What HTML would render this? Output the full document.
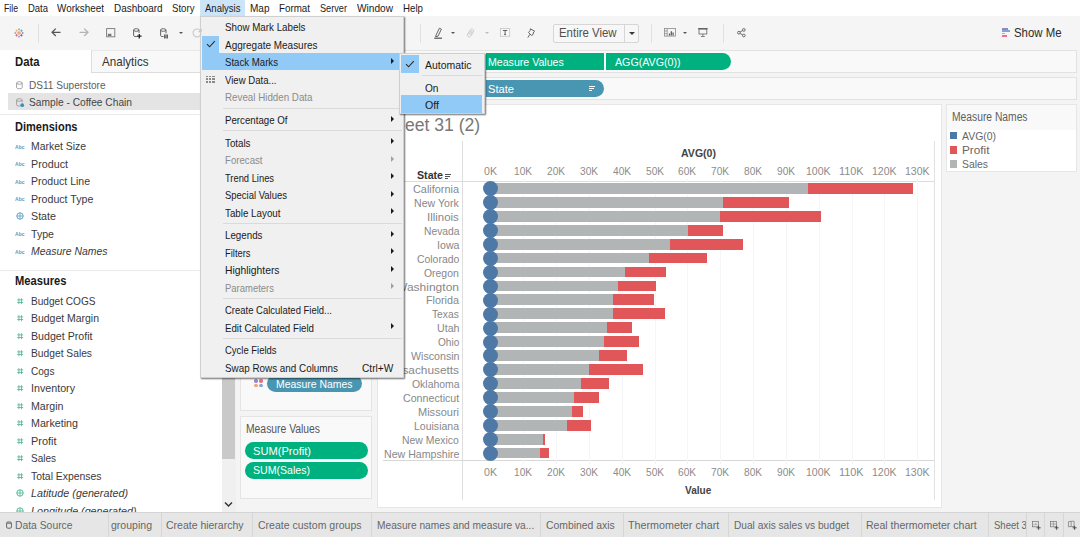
<!DOCTYPE html>
<html><head><meta charset="utf-8"><title>Tableau</title>
<style>
*{box-sizing:border-box;margin:0;padding:0}
html,body{width:1080px;height:537px;overflow:hidden;background:#f4f4f4;font-family:"Liberation Sans",sans-serif}
body{position:relative}
svg{position:absolute;overflow:visible}
</style></head><body>
<div style="position:absolute;left:0px;top:0px;width:1080px;height:16px;background:#fff;"></div>
<div style="position:absolute;left:199.8px;top:0px;width:45px;height:15.8px;background:#cce4f7;"></div>
<div style="position:absolute;top:0.00px;line-height:16px;font-size:11.5px;color:#1a1a1a;white-space:nowrap;left:4.00px;transform-origin:0 50%;transform:scaleX(0.7555);">File</div>
<div style="position:absolute;top:0.00px;line-height:16px;font-size:11.5px;color:#1a1a1a;white-space:nowrap;left:27.50px;transform-origin:0 50%;transform:scaleX(0.8233);">Data</div>
<div style="position:absolute;top:0.00px;line-height:16px;font-size:11.5px;color:#1a1a1a;white-space:nowrap;left:57.00px;transform-origin:0 50%;transform:scaleX(0.8584);">Worksheet</div>
<div style="position:absolute;top:0.00px;line-height:16px;font-size:11.5px;color:#1a1a1a;white-space:nowrap;left:114.00px;transform-origin:0 50%;transform:scaleX(0.8621);">Dashboard</div>
<div style="position:absolute;top:0.00px;line-height:16px;font-size:11.5px;color:#1a1a1a;white-space:nowrap;left:172.00px;transform-origin:0 50%;transform:scaleX(0.8383);">Story</div>
<div style="position:absolute;top:0.00px;line-height:16px;font-size:11.5px;color:#1a1a1a;white-space:nowrap;left:204.50px;transform-origin:0 50%;transform:scaleX(0.8290);">Analysis</div>
<div style="position:absolute;top:0.00px;line-height:16px;font-size:11.5px;color:#1a1a1a;white-space:nowrap;left:249.50px;transform-origin:0 50%;transform:scaleX(0.8717);">Map</div>
<div style="position:absolute;top:0.00px;line-height:16px;font-size:11.5px;color:#1a1a1a;white-space:nowrap;left:279.00px;transform-origin:0 50%;transform:scaleX(0.8512);">Format</div>
<div style="position:absolute;top:0.00px;line-height:16px;font-size:11.5px;color:#1a1a1a;white-space:nowrap;left:320.00px;transform-origin:0 50%;transform:scaleX(0.7971);">Server</div>
<div style="position:absolute;top:0.00px;line-height:16px;font-size:11.5px;color:#1a1a1a;white-space:nowrap;left:357.00px;transform-origin:0 50%;transform:scaleX(0.8802);">Window</div>
<div style="position:absolute;top:0.00px;line-height:16px;font-size:11.5px;color:#1a1a1a;white-space:nowrap;left:403.00px;transform-origin:0 50%;transform:scaleX(0.8456);">Help</div>
<div style="position:absolute;left:0px;top:16px;width:1080px;height:34px;background:#f5f5f5;"></div>
<div style="position:absolute;left:38px;top:24px;width:1px;height:19px;background:#e0e0e0;"></div>
<div style="position:absolute;left:419.5px;top:24px;width:1px;height:19px;background:#e0e0e0;"></div>
<div style="position:absolute;left:651px;top:24px;width:1px;height:19px;background:#e0e0e0;"></div>
<div style="position:absolute;left:722.5px;top:24px;width:1px;height:19px;background:#e0e0e0;"></div>
<div style="position:absolute;left:553px;top:24px;width:86px;height:19px;background:#f7f7f7;border:1px solid #d6d6d6;border-radius:2px;"></div>
<div style="position:absolute;left:624px;top:24px;width:1px;height:19px;background:#d6d6d6;"></div>
<div style="position:absolute;top:25.20px;line-height:16px;font-size:12.5px;color:#505050;white-space:nowrap;left:559.30px;transform-origin:0 50%;transform:scaleX(0.9128);">Entire View</div>
<div style="position:absolute;left:628.6px;top:31.8px;width:0;height:0;border-top:3.5px solid #3a3a3a;border-left:3.1px solid transparent;border-right:3.1px solid transparent"></div>
<div style="position:absolute;top:24.80px;line-height:16px;font-size:12.5px;color:#2a2a2a;white-space:nowrap;left:1014.00px;transform-origin:0 50%;transform:scaleX(0.9116);">Show Me</div>
<div style="position:absolute;left:1002.1px;top:27.8px;width:6px;height:1.9px;background:#9b86b8;"></div>
<div style="position:absolute;left:1002.1px;top:30.3px;width:8px;height:1.7px;background:#7fa6d6;"></div>
<div style="position:absolute;left:1002.1px;top:32.9px;width:2.8px;height:1.2px;background:#f0a070;"></div>
<div style="position:absolute;left:1002.1px;top:34.8px;width:4.8px;height:2.1px;background:#f0708a;"></div>
<div style="position:absolute;left:0px;top:50px;width:221.5px;height:462px;background:#fff;"></div>
<div style="position:absolute;left:91px;top:50px;width:130.5px;height:22.5px;background:#f8f8f8;border-left:1px solid #dcdcdc;border-bottom:1px solid #dcdcdc;border-top:1px solid #e8e8e8;"></div>
<div style="position:absolute;top:53.50px;line-height:16px;font-size:13px;color:#1a1a1a;white-space:nowrap;font-weight:bold;left:14.50px;transform-origin:0 50%;transform:scaleX(0.8695);">Data</div>
<div style="position:absolute;top:53.50px;line-height:16px;font-size:13px;color:#333;white-space:nowrap;left:102.00px;transform-origin:0 50%;transform:scaleX(0.8939);">Analytics</div>
<div style="position:absolute;top:77.00px;line-height:16px;font-size:11.5px;color:#5e5e5e;white-space:nowrap;left:29.00px;transform-origin:0 50%;transform:scaleX(0.8757);">DS11 Superstore</div>
<div style="position:absolute;left:8px;top:93.2px;width:213.5px;height:16.5px;background:#e4e4e4;"></div>
<div style="position:absolute;top:94.00px;line-height:16px;font-size:11.5px;color:#444;white-space:nowrap;left:29.00px;transform-origin:0 50%;transform:scaleX(0.8869);">Sample - Coffee Chain</div>
<div style="position:absolute;left:0px;top:113.8px;width:221.5px;height:1px;background:#ececec;"></div>
<div style="position:absolute;top:118.80px;line-height:16px;font-size:12.5px;color:#1a1a1a;white-space:nowrap;font-weight:bold;left:14.50px;transform-origin:0 50%;transform:scaleX(0.8822);">Dimensions</div>
<div style="position:absolute;top:138.25px;line-height:16px;font-size:11.5px;color:#3a3a3a;white-space:nowrap;left:31.00px;transform-origin:0 50%;transform:scaleX(0.9059);">Market Size</div>
<div style="position:absolute;top:138.75px;line-height:16px;font-size:5.8px;color:#5f9bc0;white-space:nowrap;font-weight:bold;left:15.00px;transform-origin:0 50%;transform:scaleX(0.8766);">Abc</div>
<div style="position:absolute;top:155.75px;line-height:16px;font-size:11.5px;color:#3a3a3a;white-space:nowrap;left:31.00px;transform-origin:0 50%;transform:scaleX(0.9336);">Product</div>
<div style="position:absolute;top:156.25px;line-height:16px;font-size:5.8px;color:#5f9bc0;white-space:nowrap;font-weight:bold;left:15.00px;transform-origin:0 50%;transform:scaleX(0.8766);">Abc</div>
<div style="position:absolute;top:173.25px;line-height:16px;font-size:11.5px;color:#3a3a3a;white-space:nowrap;left:31.00px;transform-origin:0 50%;transform:scaleX(0.9137);">Product Line</div>
<div style="position:absolute;top:173.75px;line-height:16px;font-size:5.8px;color:#5f9bc0;white-space:nowrap;font-weight:bold;left:15.00px;transform-origin:0 50%;transform:scaleX(0.8766);">Abc</div>
<div style="position:absolute;top:190.75px;line-height:16px;font-size:11.5px;color:#3a3a3a;white-space:nowrap;left:31.00px;transform-origin:0 50%;transform:scaleX(0.9224);">Product Type</div>
<div style="position:absolute;top:191.25px;line-height:16px;font-size:5.8px;color:#5f9bc0;white-space:nowrap;font-weight:bold;left:15.00px;transform-origin:0 50%;transform:scaleX(0.8766);">Abc</div>
<div style="position:absolute;top:208.25px;line-height:16px;font-size:11.5px;color:#3a3a3a;white-space:nowrap;left:31.00px;transform-origin:0 50%;transform:scaleX(0.9310);">State</div>
<svg style="left:15.6px;top:212.35px" width="8" height="8" viewBox="0 0 8 8"><circle cx="4" cy="4" r="3.2" fill="none" stroke="#4d94c1" stroke-width="0.85"/><path d="M4 0.8V7.2M0.8 4H7.2" stroke="#4d94c1" stroke-width="0.75"/></svg>
<div style="position:absolute;top:225.75px;line-height:16px;font-size:11.5px;color:#3a3a3a;white-space:nowrap;left:31.00px;transform-origin:0 50%;transform:scaleX(0.9225);">Type</div>
<div style="position:absolute;top:226.25px;line-height:16px;font-size:5.8px;color:#5f9bc0;white-space:nowrap;font-weight:bold;left:15.00px;transform-origin:0 50%;transform:scaleX(0.8766);">Abc</div>
<div style="position:absolute;top:243.25px;line-height:16px;font-size:11.5px;color:#3a3a3a;white-space:nowrap;font-style:italic;left:31.00px;transform-origin:0 50%;transform:scaleX(0.9068);">Measure Names</div>
<div style="position:absolute;top:243.75px;line-height:16px;font-size:5.8px;color:#5f9bc0;white-space:nowrap;font-weight:bold;left:15.00px;transform-origin:0 50%;transform:scaleX(0.8766);">Abc</div>
<div style="position:absolute;left:0px;top:269.6px;width:221.5px;height:1px;background:#ececec;"></div>
<div style="position:absolute;top:273.30px;line-height:16px;font-size:12.5px;color:#1a1a1a;white-space:nowrap;font-weight:bold;left:14.50px;transform-origin:0 50%;transform:scaleX(0.8930);">Measures</div>
<div style="position:absolute;top:292.75px;line-height:16px;font-size:11.5px;color:#3a3a3a;white-space:nowrap;left:31.00px;transform-origin:0 50%;transform:scaleX(0.8774);">Budget COGS</div>
<svg style="left:16.6px;top:297.65px" width="6.4" height="6.4" viewBox="0 0 6.4 6.4"><path d="M1.9 0.2V6.2M4.5 0.2V6.2M0.2 1.9H6.2M0.2 4.5H6.2" stroke="#3fb08d" stroke-width="0.75" fill="none"/></svg>
<div style="position:absolute;top:310.25px;line-height:16px;font-size:11.5px;color:#3a3a3a;white-space:nowrap;left:31.00px;transform-origin:0 50%;transform:scaleX(0.9092);">Budget Margin</div>
<svg style="left:16.6px;top:315.15px" width="6.4" height="6.4" viewBox="0 0 6.4 6.4"><path d="M1.9 0.2V6.2M4.5 0.2V6.2M0.2 1.9H6.2M0.2 4.5H6.2" stroke="#3fb08d" stroke-width="0.75" fill="none"/></svg>
<div style="position:absolute;top:327.75px;line-height:16px;font-size:11.5px;color:#3a3a3a;white-space:nowrap;left:31.00px;transform-origin:0 50%;transform:scaleX(0.9250);">Budget Profit</div>
<svg style="left:16.6px;top:332.65px" width="6.4" height="6.4" viewBox="0 0 6.4 6.4"><path d="M1.9 0.2V6.2M4.5 0.2V6.2M0.2 1.9H6.2M0.2 4.5H6.2" stroke="#3fb08d" stroke-width="0.75" fill="none"/></svg>
<div style="position:absolute;top:345.25px;line-height:16px;font-size:11.5px;color:#3a3a3a;white-space:nowrap;left:31.00px;transform-origin:0 50%;transform:scaleX(0.8917);">Budget Sales</div>
<svg style="left:16.6px;top:350.15px" width="6.4" height="6.4" viewBox="0 0 6.4 6.4"><path d="M1.9 0.2V6.2M4.5 0.2V6.2M0.2 1.9H6.2M0.2 4.5H6.2" stroke="#3fb08d" stroke-width="0.75" fill="none"/></svg>
<div style="position:absolute;top:362.75px;line-height:16px;font-size:11.5px;color:#3a3a3a;white-space:nowrap;left:31.00px;transform-origin:0 50%;transform:scaleX(0.8753);">Cogs</div>
<svg style="left:16.6px;top:367.65px" width="6.4" height="6.4" viewBox="0 0 6.4 6.4"><path d="M1.9 0.2V6.2M4.5 0.2V6.2M0.2 1.9H6.2M0.2 4.5H6.2" stroke="#3fb08d" stroke-width="0.75" fill="none"/></svg>
<div style="position:absolute;top:380.25px;line-height:16px;font-size:11.5px;color:#3a3a3a;white-space:nowrap;left:31.00px;transform-origin:0 50%;transform:scaleX(0.9302);">Inventory</div>
<svg style="left:16.6px;top:385.15px" width="6.4" height="6.4" viewBox="0 0 6.4 6.4"><path d="M1.9 0.2V6.2M4.5 0.2V6.2M0.2 1.9H6.2M0.2 4.5H6.2" stroke="#3fb08d" stroke-width="0.75" fill="none"/></svg>
<div style="position:absolute;top:397.75px;line-height:16px;font-size:11.5px;color:#3a3a3a;white-space:nowrap;left:31.00px;transform-origin:0 50%;transform:scaleX(0.9246);">Margin</div>
<svg style="left:16.6px;top:402.65px" width="6.4" height="6.4" viewBox="0 0 6.4 6.4"><path d="M1.9 0.2V6.2M4.5 0.2V6.2M0.2 1.9H6.2M0.2 4.5H6.2" stroke="#3fb08d" stroke-width="0.75" fill="none"/></svg>
<div style="position:absolute;top:415.25px;line-height:16px;font-size:11.5px;color:#3a3a3a;white-space:nowrap;left:31.00px;transform-origin:0 50%;transform:scaleX(0.9308);">Marketing</div>
<svg style="left:16.6px;top:420.15px" width="6.4" height="6.4" viewBox="0 0 6.4 6.4"><path d="M1.9 0.2V6.2M4.5 0.2V6.2M0.2 1.9H6.2M0.2 4.5H6.2" stroke="#3fb08d" stroke-width="0.75" fill="none"/></svg>
<div style="position:absolute;top:432.75px;line-height:16px;font-size:11.5px;color:#3a3a3a;white-space:nowrap;left:31.00px;transform-origin:0 50%;transform:scaleX(0.9500);">Profit</div>
<svg style="left:16.6px;top:437.65px" width="6.4" height="6.4" viewBox="0 0 6.4 6.4"><path d="M1.9 0.2V6.2M4.5 0.2V6.2M0.2 1.9H6.2M0.2 4.5H6.2" stroke="#3fb08d" stroke-width="0.75" fill="none"/></svg>
<div style="position:absolute;top:450.25px;line-height:16px;font-size:11.5px;color:#3a3a3a;white-space:nowrap;left:31.00px;transform-origin:0 50%;transform:scaleX(0.8691);">Sales</div>
<svg style="left:16.6px;top:455.15px" width="6.4" height="6.4" viewBox="0 0 6.4 6.4"><path d="M1.9 0.2V6.2M4.5 0.2V6.2M0.2 1.9H6.2M0.2 4.5H6.2" stroke="#3fb08d" stroke-width="0.75" fill="none"/></svg>
<div style="position:absolute;top:467.75px;line-height:16px;font-size:11.5px;color:#3a3a3a;white-space:nowrap;left:31.00px;transform-origin:0 50%;transform:scaleX(0.9040);">Total Expenses</div>
<svg style="left:16.6px;top:472.65px" width="6.4" height="6.4" viewBox="0 0 6.4 6.4"><path d="M1.9 0.2V6.2M4.5 0.2V6.2M0.2 1.9H6.2M0.2 4.5H6.2" stroke="#3fb08d" stroke-width="0.75" fill="none"/></svg>
<div style="position:absolute;top:485.25px;line-height:16px;font-size:11.5px;color:#3a3a3a;white-space:nowrap;font-style:italic;left:31.00px;transform-origin:0 50%;transform:scaleX(0.9365);">Latitude (generated)</div>
<svg style="left:15.6px;top:489.35px" width="8" height="8" viewBox="0 0 8 8"><circle cx="4" cy="4" r="3.2" fill="none" stroke="#3bb08f" stroke-width="0.85"/><path d="M4 0.8V7.2M0.8 4H7.2" stroke="#3bb08f" stroke-width="0.75"/></svg>
<div style="position:absolute;top:502.75px;line-height:16px;font-size:11.5px;color:#3a3a3a;white-space:nowrap;font-style:italic;left:31.00px;transform-origin:0 50%;transform:scaleX(0.9322);">Longitude (generated)</div>
<svg style="left:15.6px;top:506.85px" width="8" height="8" viewBox="0 0 8 8"><circle cx="4" cy="4" r="3.2" fill="none" stroke="#3bb08f" stroke-width="0.85"/><path d="M4 0.8V7.2M0.8 4H7.2" stroke="#3bb08f" stroke-width="0.75"/></svg>
<div style="position:absolute;left:221.5px;top:50px;width:14px;height:462px;background:#f0f0f0;"></div>
<div style="position:absolute;left:221.5px;top:330px;width:13.5px;height:129px;background:#c9c9c9;"></div>
<svg style="left:224px;top:501px" width="9" height="7" viewBox="0 0 9 7"><path d="M1 1.5L4.5 5L8 1.5" stroke="#333" stroke-width="1.4" fill="none"/></svg>
<div style="position:absolute;left:240px;top:105px;width:131.5px;height:306px;background:#f9f9f9;border:1px solid #e4e4e4;"></div>
<div style="position:absolute;left:267px;top:374.5px;width:95px;height:17px;background:#4996b2;border-radius:8.5px;"></div>
<div style="position:absolute;top:375.50px;line-height:16px;font-size:11.5px;color:#fff;white-space:nowrap;left:276.00px;transform-origin:0 50%;transform:scaleX(0.9068);">Measure Names</div>
<div style="position:absolute;left:254.1px;top:379px;width:3.6px;height:3.6px;background:#9a86c5;border-radius:50%;"></div>
<div style="position:absolute;left:259.0px;top:379px;width:3.6px;height:3.6px;background:#ee6b82;border-radius:50%;"></div>
<div style="position:absolute;left:254.1px;top:383.5px;width:3.6px;height:3.6px;background:#f2a273;border-radius:50%;"></div>
<div style="position:absolute;left:259.0px;top:383.5px;width:3.6px;height:3.6px;background:#83a6d6;border-radius:50%;"></div>
<div style="position:absolute;left:240px;top:415.5px;width:131.5px;height:83.5px;background:#f9f9f9;border:1px solid #e4e4e4;"></div>
<div style="position:absolute;top:420.50px;line-height:16px;font-size:12px;color:#555;white-space:nowrap;left:246.00px;transform-origin:0 50%;transform:scaleX(0.8622);">Measure Values</div>
<div style="position:absolute;left:244.5px;top:442px;width:123px;height:17px;background:#00b180;border-radius:8.5px;"></div>
<div style="position:absolute;left:244.5px;top:461.5px;width:123px;height:17px;background:#00b180;border-radius:8.5px;"></div>
<div style="position:absolute;top:442.50px;line-height:16px;font-size:11.5px;color:#fff;white-space:nowrap;left:253.00px;transform-origin:0 50%;transform:scaleX(0.9658);">SUM(Profit)</div>
<div style="position:absolute;top:462.00px;line-height:16px;font-size:11.5px;color:#fff;white-space:nowrap;left:253.00px;transform-origin:0 50%;transform:scaleX(0.9196);">SUM(Sales)</div>
<div style="position:absolute;left:377px;top:50px;width:700px;height:23px;background:#f9f9f9;border:1px solid #e2e2e2;"></div>
<div style="position:absolute;left:377px;top:77px;width:700px;height:23px;background:#f9f9f9;border:1px solid #e2e2e2;"></div>
<div style="position:absolute;left:486px;top:53px;width:118px;height:17px;background:#00b180;border-radius:0;"></div>
<div style="position:absolute;left:605.75px;top:53px;width:125.5px;height:17px;background:#00b180;border-radius:0 8.5px 8.5px 0;"></div>
<div style="position:absolute;top:53.50px;line-height:16px;font-size:11.5px;color:#fff;white-space:nowrap;left:488.00px;transform-origin:0 50%;transform:scaleX(0.9210);">Measure Values</div>
<div style="position:absolute;top:53.50px;line-height:16px;font-size:11.5px;color:#fff;white-space:nowrap;left:615.00px;transform-origin:0 50%;transform:scaleX(0.9264);">AGG(AVG(0))</div>
<div style="position:absolute;left:486px;top:80px;width:118px;height:17px;background:#4996b2;border-radius:0 8.5px 8.5px 0;"></div>
<div style="position:absolute;top:80.50px;line-height:16px;font-size:11.5px;color:#fff;white-space:nowrap;left:488.00px;transform-origin:0 50%;transform:scaleX(0.9683);">State</div>
<div style="position:absolute;left:589px;top:86.0px;width:6px;height:1.1px;background:#fff;"></div>
<div style="position:absolute;left:589px;top:88.2px;width:4.5px;height:1.1px;background:#fff;"></div>
<div style="position:absolute;left:589px;top:90.4px;width:3px;height:1.1px;background:#fff;"></div>
<div style="position:absolute;left:376.5px;top:104px;width:565px;height:403.5px;background:#fff;border:1px solid #e6e6e6;"></div>
<div style="position:absolute;top:117.00px;line-height:16px;font-size:17.5px;color:#787878;white-space:nowrap;left:404.60px;transform-origin:0 50%;transform:scaleX(1.0039);">eet 31 (2)</div>
<div style="position:absolute;left:462px;top:141px;width:1px;height:359px;background:#dedede;"></div>
<div style="position:absolute;left:383px;top:181.3px;width:551px;height:1px;background:#dcdcdc;"></div>
<div style="position:absolute;left:383px;top:460px;width:551px;height:1px;background:#d8d8d8;"></div>
<div style="position:absolute;left:934px;top:141px;width:1px;height:359px;background:#e2e2e2;"></div>
<div style="position:absolute;left:522.5px;top:182.5px;width:1px;height:278px;background:#f6f6f6;"></div>
<div style="position:absolute;left:522.5px;top:178.5px;width:1px;height:3px;background:#f1f1f1;"></div>
<div style="position:absolute;left:522.5px;top:461px;width:1px;height:3px;background:#f1f1f1;"></div>
<div style="position:absolute;left:555.5px;top:182.5px;width:1px;height:278px;background:#f6f6f6;"></div>
<div style="position:absolute;left:555.5px;top:178.5px;width:1px;height:3px;background:#f1f1f1;"></div>
<div style="position:absolute;left:555.5px;top:461px;width:1px;height:3px;background:#f1f1f1;"></div>
<div style="position:absolute;left:588.5px;top:182.5px;width:1px;height:278px;background:#f6f6f6;"></div>
<div style="position:absolute;left:588.5px;top:178.5px;width:1px;height:3px;background:#f1f1f1;"></div>
<div style="position:absolute;left:588.5px;top:461px;width:1px;height:3px;background:#f1f1f1;"></div>
<div style="position:absolute;left:621.5px;top:182.5px;width:1px;height:278px;background:#f6f6f6;"></div>
<div style="position:absolute;left:621.5px;top:178.5px;width:1px;height:3px;background:#f1f1f1;"></div>
<div style="position:absolute;left:621.5px;top:461px;width:1px;height:3px;background:#f1f1f1;"></div>
<div style="position:absolute;left:654.5px;top:182.5px;width:1px;height:278px;background:#f6f6f6;"></div>
<div style="position:absolute;left:654.5px;top:178.5px;width:1px;height:3px;background:#f1f1f1;"></div>
<div style="position:absolute;left:654.5px;top:461px;width:1px;height:3px;background:#f1f1f1;"></div>
<div style="position:absolute;left:686.5px;top:182.5px;width:1px;height:278px;background:#f6f6f6;"></div>
<div style="position:absolute;left:686.5px;top:178.5px;width:1px;height:3px;background:#f1f1f1;"></div>
<div style="position:absolute;left:686.5px;top:461px;width:1px;height:3px;background:#f1f1f1;"></div>
<div style="position:absolute;left:719.5px;top:182.5px;width:1px;height:278px;background:#f6f6f6;"></div>
<div style="position:absolute;left:719.5px;top:178.5px;width:1px;height:3px;background:#f1f1f1;"></div>
<div style="position:absolute;left:719.5px;top:461px;width:1px;height:3px;background:#f1f1f1;"></div>
<div style="position:absolute;left:752.5px;top:182.5px;width:1px;height:278px;background:#f6f6f6;"></div>
<div style="position:absolute;left:752.5px;top:178.5px;width:1px;height:3px;background:#f1f1f1;"></div>
<div style="position:absolute;left:752.5px;top:461px;width:1px;height:3px;background:#f1f1f1;"></div>
<div style="position:absolute;left:785.5px;top:182.5px;width:1px;height:278px;background:#f6f6f6;"></div>
<div style="position:absolute;left:785.5px;top:178.5px;width:1px;height:3px;background:#f1f1f1;"></div>
<div style="position:absolute;left:785.5px;top:461px;width:1px;height:3px;background:#f1f1f1;"></div>
<div style="position:absolute;left:818.5px;top:182.5px;width:1px;height:278px;background:#f6f6f6;"></div>
<div style="position:absolute;left:818.5px;top:178.5px;width:1px;height:3px;background:#f1f1f1;"></div>
<div style="position:absolute;left:818.5px;top:461px;width:1px;height:3px;background:#f1f1f1;"></div>
<div style="position:absolute;left:851.5px;top:182.5px;width:1px;height:278px;background:#f6f6f6;"></div>
<div style="position:absolute;left:851.5px;top:178.5px;width:1px;height:3px;background:#f1f1f1;"></div>
<div style="position:absolute;left:851.5px;top:461px;width:1px;height:3px;background:#f1f1f1;"></div>
<div style="position:absolute;left:883.5px;top:182.5px;width:1px;height:278px;background:#f6f6f6;"></div>
<div style="position:absolute;left:883.5px;top:178.5px;width:1px;height:3px;background:#f1f1f1;"></div>
<div style="position:absolute;left:883.5px;top:461px;width:1px;height:3px;background:#f1f1f1;"></div>
<div style="position:absolute;left:916.5px;top:182.5px;width:1px;height:278px;background:#f6f6f6;"></div>
<div style="position:absolute;left:916.5px;top:178.5px;width:1px;height:3px;background:#f1f1f1;"></div>
<div style="position:absolute;left:916.5px;top:461px;width:1px;height:3px;background:#f1f1f1;"></div>
<div style="position:absolute;top:166.80px;line-height:16px;font-size:11.5px;color:#333;white-space:nowrap;font-weight:bold;left:416.50px;transform-origin:0 50%;transform:scaleX(0.9246);">State</div>
<div style="position:absolute;left:444.75px;top:174.0px;width:6.5px;height:1.1px;background:#555;"></div>
<div style="position:absolute;left:444.75px;top:176.2px;width:5px;height:1.1px;background:#555;"></div>
<div style="position:absolute;left:444.75px;top:178.4px;width:3px;height:1.1px;background:#555;"></div>
<div style="position:absolute;top:145.00px;line-height:16px;font-size:11.5px;color:#444;white-space:nowrap;font-weight:bold;left:680.50px;transform-origin:0 50%;transform:scaleX(0.9181);">AVG(0)</div>
<div style="position:absolute;top:481.80px;line-height:16px;font-size:11.5px;color:#444;white-space:nowrap;font-weight:bold;left:685.00px;transform-origin:0 50%;transform:scaleX(0.8753);">Value</div>
<div style="position:absolute;top:163.25px;line-height:16px;font-size:11.5px;color:#8c8c8c;white-space:nowrap;left:484.00px;transform-origin:0 50%;transform:scaleX(0.9242);">0K</div>
<div style="position:absolute;top:464.25px;line-height:16px;font-size:11.5px;color:#8c8c8c;white-space:nowrap;left:484.00px;transform-origin:0 50%;transform:scaleX(0.9242);">0K</div>
<div style="position:absolute;top:163.25px;line-height:16px;font-size:11.5px;color:#8c8c8c;white-space:nowrap;left:514.32px;transform-origin:0 50%;transform:scaleX(0.8797);">10K</div>
<div style="position:absolute;top:464.25px;line-height:16px;font-size:11.5px;color:#8c8c8c;white-space:nowrap;left:514.32px;transform-origin:0 50%;transform:scaleX(0.8797);">10K</div>
<div style="position:absolute;top:163.25px;line-height:16px;font-size:11.5px;color:#8c8c8c;white-space:nowrap;left:547.14px;transform-origin:0 50%;transform:scaleX(0.8797);">20K</div>
<div style="position:absolute;top:464.25px;line-height:16px;font-size:11.5px;color:#8c8c8c;white-space:nowrap;left:547.14px;transform-origin:0 50%;transform:scaleX(0.8797);">20K</div>
<div style="position:absolute;top:163.25px;line-height:16px;font-size:11.5px;color:#8c8c8c;white-space:nowrap;left:579.96px;transform-origin:0 50%;transform:scaleX(0.8797);">30K</div>
<div style="position:absolute;top:464.25px;line-height:16px;font-size:11.5px;color:#8c8c8c;white-space:nowrap;left:579.96px;transform-origin:0 50%;transform:scaleX(0.8797);">30K</div>
<div style="position:absolute;top:163.25px;line-height:16px;font-size:11.5px;color:#8c8c8c;white-space:nowrap;left:612.78px;transform-origin:0 50%;transform:scaleX(0.8797);">40K</div>
<div style="position:absolute;top:464.25px;line-height:16px;font-size:11.5px;color:#8c8c8c;white-space:nowrap;left:612.78px;transform-origin:0 50%;transform:scaleX(0.8797);">40K</div>
<div style="position:absolute;top:163.25px;line-height:16px;font-size:11.5px;color:#8c8c8c;white-space:nowrap;left:645.60px;transform-origin:0 50%;transform:scaleX(0.8797);">50K</div>
<div style="position:absolute;top:464.25px;line-height:16px;font-size:11.5px;color:#8c8c8c;white-space:nowrap;left:645.60px;transform-origin:0 50%;transform:scaleX(0.8797);">50K</div>
<div style="position:absolute;top:163.25px;line-height:16px;font-size:11.5px;color:#8c8c8c;white-space:nowrap;left:678.42px;transform-origin:0 50%;transform:scaleX(0.8797);">60K</div>
<div style="position:absolute;top:464.25px;line-height:16px;font-size:11.5px;color:#8c8c8c;white-space:nowrap;left:678.42px;transform-origin:0 50%;transform:scaleX(0.8797);">60K</div>
<div style="position:absolute;top:163.25px;line-height:16px;font-size:11.5px;color:#8c8c8c;white-space:nowrap;left:711.24px;transform-origin:0 50%;transform:scaleX(0.8797);">70K</div>
<div style="position:absolute;top:464.25px;line-height:16px;font-size:11.5px;color:#8c8c8c;white-space:nowrap;left:711.24px;transform-origin:0 50%;transform:scaleX(0.8797);">70K</div>
<div style="position:absolute;top:163.25px;line-height:16px;font-size:11.5px;color:#8c8c8c;white-space:nowrap;left:744.06px;transform-origin:0 50%;transform:scaleX(0.8797);">80K</div>
<div style="position:absolute;top:464.25px;line-height:16px;font-size:11.5px;color:#8c8c8c;white-space:nowrap;left:744.06px;transform-origin:0 50%;transform:scaleX(0.8797);">80K</div>
<div style="position:absolute;top:163.25px;line-height:16px;font-size:11.5px;color:#8c8c8c;white-space:nowrap;left:776.88px;transform-origin:0 50%;transform:scaleX(0.8797);">90K</div>
<div style="position:absolute;top:464.25px;line-height:16px;font-size:11.5px;color:#8c8c8c;white-space:nowrap;left:776.88px;transform-origin:0 50%;transform:scaleX(0.8797);">90K</div>
<div style="position:absolute;top:163.25px;line-height:16px;font-size:11.5px;color:#8c8c8c;white-space:nowrap;left:806.40px;transform-origin:0 50%;transform:scaleX(0.9159);">100K</div>
<div style="position:absolute;top:464.25px;line-height:16px;font-size:11.5px;color:#8c8c8c;white-space:nowrap;left:806.40px;transform-origin:0 50%;transform:scaleX(0.9159);">100K</div>
<div style="position:absolute;top:163.25px;line-height:16px;font-size:11.5px;color:#8c8c8c;white-space:nowrap;left:839.22px;transform-origin:0 50%;transform:scaleX(0.9460);">110K</div>
<div style="position:absolute;top:464.25px;line-height:16px;font-size:11.5px;color:#8c8c8c;white-space:nowrap;left:839.22px;transform-origin:0 50%;transform:scaleX(0.9460);">110K</div>
<div style="position:absolute;top:163.25px;line-height:16px;font-size:11.5px;color:#8c8c8c;white-space:nowrap;left:872.04px;transform-origin:0 50%;transform:scaleX(0.9159);">120K</div>
<div style="position:absolute;top:464.25px;line-height:16px;font-size:11.5px;color:#8c8c8c;white-space:nowrap;left:872.04px;transform-origin:0 50%;transform:scaleX(0.9159);">120K</div>
<div style="position:absolute;top:163.25px;line-height:16px;font-size:11.5px;color:#8c8c8c;white-space:nowrap;left:904.86px;transform-origin:0 50%;transform:scaleX(0.9159);">130K</div>
<div style="position:absolute;top:464.25px;line-height:16px;font-size:11.5px;color:#8c8c8c;white-space:nowrap;left:904.86px;transform-origin:0 50%;transform:scaleX(0.9159);">130K</div>
<div style="position:absolute;top:181.00px;line-height:16px;font-size:11.5px;color:#888;white-space:nowrap;left:413.00px;transform-origin:0 50%;transform:scaleX(0.9469);">California</div>
<div style="position:absolute;left:490.5px;top:183.0px;width:317.5px;height:10.8px;background:#b1b5b5;"></div>
<div style="position:absolute;left:808px;top:183.0px;width:104.5px;height:10.8px;background:#e15759;"></div>
<div style="position:absolute;top:194.93px;line-height:16px;font-size:11.5px;color:#888;white-space:nowrap;left:414.00px;transform-origin:0 50%;transform:scaleX(0.9223);">New York</div>
<div style="position:absolute;left:490.5px;top:196.93px;width:232.5px;height:10.8px;background:#b1b5b5;"></div>
<div style="position:absolute;left:723px;top:196.93px;width:65.75px;height:10.8px;background:#e15759;"></div>
<div style="position:absolute;top:208.86px;line-height:16px;font-size:11.5px;color:#888;white-space:nowrap;left:427.25px;transform-origin:0 50%;transform:scaleX(0.9935);">Illinois</div>
<div style="position:absolute;left:490.5px;top:210.85999999999999px;width:229.5px;height:10.8px;background:#b1b5b5;"></div>
<div style="position:absolute;left:720px;top:210.85999999999999px;width:100.75px;height:10.8px;background:#e15759;"></div>
<div style="position:absolute;top:222.79px;line-height:16px;font-size:11.5px;color:#888;white-space:nowrap;left:423.50px;transform-origin:0 50%;transform:scaleX(0.8956);">Nevada</div>
<div style="position:absolute;left:490.5px;top:224.79px;width:197.0px;height:10.8px;background:#b1b5b5;"></div>
<div style="position:absolute;left:687.5px;top:224.79px;width:35.0px;height:10.8px;background:#e15759;"></div>
<div style="position:absolute;top:236.72px;line-height:16px;font-size:11.5px;color:#888;white-space:nowrap;left:436.50px;transform-origin:0 50%;transform:scaleX(0.9262);">Iowa</div>
<div style="position:absolute;left:490.5px;top:238.72px;width:179.5px;height:10.8px;background:#b1b5b5;"></div>
<div style="position:absolute;left:670px;top:238.72px;width:73px;height:10.8px;background:#e15759;"></div>
<div style="position:absolute;top:250.65px;line-height:16px;font-size:11.5px;color:#888;white-space:nowrap;left:416.75px;transform-origin:0 50%;transform:scaleX(0.9053);">Colorado</div>
<div style="position:absolute;left:490.5px;top:252.65px;width:158.25px;height:10.8px;background:#b1b5b5;"></div>
<div style="position:absolute;left:648.75px;top:252.65px;width:58.0px;height:10.8px;background:#e15759;"></div>
<div style="position:absolute;top:264.58px;line-height:16px;font-size:11.5px;color:#888;white-space:nowrap;left:424.25px;transform-origin:0 50%;transform:scaleX(0.9059);">Oregon</div>
<div style="position:absolute;left:490.5px;top:266.58000000000004px;width:134.0px;height:10.8px;background:#b1b5b5;"></div>
<div style="position:absolute;left:624.5px;top:266.58000000000004px;width:41.25px;height:10.8px;background:#e15759;"></div>
<div style="position:absolute;top:278.51px;line-height:16px;font-size:11.5px;color:#888;white-space:nowrap;left:396.00px;transform-origin:0 50%;transform:scaleX(1.0447);">Washington</div>
<div style="position:absolute;left:490.5px;top:280.51px;width:127.75px;height:10.8px;background:#b1b5b5;"></div>
<div style="position:absolute;left:618.25px;top:280.51px;width:37.25px;height:10.8px;background:#e15759;"></div>
<div style="position:absolute;top:292.44px;line-height:16px;font-size:11.5px;color:#888;white-space:nowrap;left:426.00px;transform-origin:0 50%;transform:scaleX(0.9388);">Florida</div>
<div style="position:absolute;left:490.5px;top:294.44000000000005px;width:122.5px;height:10.8px;background:#b1b5b5;"></div>
<div style="position:absolute;left:613px;top:294.44000000000005px;width:40.75px;height:10.8px;background:#e15759;"></div>
<div style="position:absolute;top:306.37px;line-height:16px;font-size:11.5px;color:#888;white-space:nowrap;left:432.25px;transform-origin:0 50%;transform:scaleX(0.8904);">Texas</div>
<div style="position:absolute;left:490.5px;top:308.37px;width:122.5px;height:10.8px;background:#b1b5b5;"></div>
<div style="position:absolute;left:613px;top:308.37px;width:52px;height:10.8px;background:#e15759;"></div>
<div style="position:absolute;top:320.30px;line-height:16px;font-size:11.5px;color:#888;white-space:nowrap;left:436.50px;transform-origin:0 50%;transform:scaleX(0.9262);">Utah</div>
<div style="position:absolute;left:490.5px;top:322.30000000000007px;width:116.0px;height:10.8px;background:#b1b5b5;"></div>
<div style="position:absolute;left:606.5px;top:322.30000000000007px;width:25.25px;height:10.8px;background:#e15759;"></div>
<div style="position:absolute;top:334.23px;line-height:16px;font-size:11.5px;color:#888;white-space:nowrap;left:437.75px;transform-origin:0 50%;transform:scaleX(0.8748);">Ohio</div>
<div style="position:absolute;left:490.5px;top:336.23px;width:113.0px;height:10.8px;background:#b1b5b5;"></div>
<div style="position:absolute;left:603.5px;top:336.23px;width:35.5px;height:10.8px;background:#e15759;"></div>
<div style="position:absolute;top:348.16px;line-height:16px;font-size:11.5px;color:#888;white-space:nowrap;left:410.50px;transform-origin:0 50%;transform:scaleX(0.9255);">Wisconsin</div>
<div style="position:absolute;left:490.5px;top:350.16px;width:108.5px;height:10.8px;background:#b1b5b5;"></div>
<div style="position:absolute;left:599px;top:350.16px;width:28.25px;height:10.8px;background:#e15759;"></div>
<div style="position:absolute;top:362.09px;line-height:16px;font-size:11.5px;color:#888;white-space:nowrap;left:380.00px;transform-origin:0 50%;transform:scaleX(1.0300);">Massachusetts</div>
<div style="position:absolute;left:490.5px;top:364.09000000000003px;width:98.5px;height:10.8px;background:#b1b5b5;"></div>
<div style="position:absolute;left:589px;top:364.09000000000003px;width:53.75px;height:10.8px;background:#e15759;"></div>
<div style="position:absolute;top:376.02px;line-height:16px;font-size:11.5px;color:#888;white-space:nowrap;left:411.50px;transform-origin:0 50%;transform:scaleX(0.9063);">Oklahoma</div>
<div style="position:absolute;left:490.5px;top:378.02px;width:90.0px;height:10.8px;background:#b1b5b5;"></div>
<div style="position:absolute;left:580.5px;top:378.02px;width:28.25px;height:10.8px;background:#e15759;"></div>
<div style="position:absolute;top:389.95px;line-height:16px;font-size:11.5px;color:#888;white-space:nowrap;left:402.75px;transform-origin:0 50%;transform:scaleX(0.9262);">Connecticut</div>
<div style="position:absolute;left:490.5px;top:391.95000000000005px;width:83.25px;height:10.8px;background:#b1b5b5;"></div>
<div style="position:absolute;left:573.75px;top:391.95000000000005px;width:25.25px;height:10.8px;background:#e15759;"></div>
<div style="position:absolute;top:403.88px;line-height:16px;font-size:11.5px;color:#888;white-space:nowrap;left:418.00px;transform-origin:0 50%;transform:scaleX(0.9577);">Missouri</div>
<div style="position:absolute;left:490.5px;top:405.88px;width:81.0px;height:10.8px;background:#b1b5b5;"></div>
<div style="position:absolute;left:571.5px;top:405.88px;width:11.75px;height:10.8px;background:#e15759;"></div>
<div style="position:absolute;top:417.81px;line-height:16px;font-size:11.5px;color:#888;white-space:nowrap;left:414.00px;transform-origin:0 50%;transform:scaleX(0.9140);">Louisiana</div>
<div style="position:absolute;left:490.5px;top:419.81000000000006px;width:76.0px;height:10.8px;background:#b1b5b5;"></div>
<div style="position:absolute;left:566.5px;top:419.81000000000006px;width:24.25px;height:10.8px;background:#e15759;"></div>
<div style="position:absolute;top:431.74px;line-height:16px;font-size:11.5px;color:#888;white-space:nowrap;left:402.25px;transform-origin:0 50%;transform:scaleX(0.9062);">New Mexico</div>
<div style="position:absolute;left:490.5px;top:433.74px;width:52.5px;height:10.8px;background:#b1b5b5;"></div>
<div style="position:absolute;left:543px;top:433.74px;width:2.25px;height:10.8px;background:#e15759;"></div>
<div style="position:absolute;top:445.67px;line-height:16px;font-size:11.5px;color:#888;white-space:nowrap;left:383.50px;transform-origin:0 50%;transform:scaleX(0.9230);">New Hampshire</div>
<div style="position:absolute;left:490.5px;top:447.6700000000001px;width:49.0px;height:10.8px;background:#b1b5b5;"></div>
<div style="position:absolute;left:539.5px;top:447.6700000000001px;width:9.0px;height:10.8px;background:#e15759;"></div>
<div style="position:absolute;left:483.0px;top:181.3px;width:15px;height:15px;background:#4e79a7;border-radius:50%;"></div>
<div style="position:absolute;left:483.0px;top:195.23000000000002px;width:15px;height:15px;background:#4e79a7;border-radius:50%;"></div>
<div style="position:absolute;left:483.0px;top:209.16000000000003px;width:15px;height:15px;background:#4e79a7;border-radius:50%;"></div>
<div style="position:absolute;left:483.0px;top:223.09px;width:15px;height:15px;background:#4e79a7;border-radius:50%;"></div>
<div style="position:absolute;left:483.0px;top:237.02px;width:15px;height:15px;background:#4e79a7;border-radius:50%;"></div>
<div style="position:absolute;left:483.0px;top:250.95000000000005px;width:15px;height:15px;background:#4e79a7;border-radius:50%;"></div>
<div style="position:absolute;left:483.0px;top:264.88px;width:15px;height:15px;background:#4e79a7;border-radius:50%;"></div>
<div style="position:absolute;left:483.0px;top:278.81px;width:15px;height:15px;background:#4e79a7;border-radius:50%;"></div>
<div style="position:absolute;left:483.0px;top:292.74px;width:15px;height:15px;background:#4e79a7;border-radius:50%;"></div>
<div style="position:absolute;left:483.0px;top:306.67px;width:15px;height:15px;background:#4e79a7;border-radius:50%;"></div>
<div style="position:absolute;left:483.0px;top:320.6px;width:15px;height:15px;background:#4e79a7;border-radius:50%;"></div>
<div style="position:absolute;left:483.0px;top:334.53px;width:15px;height:15px;background:#4e79a7;border-radius:50%;"></div>
<div style="position:absolute;left:483.0px;top:348.46000000000004px;width:15px;height:15px;background:#4e79a7;border-radius:50%;"></div>
<div style="position:absolute;left:483.0px;top:362.39px;width:15px;height:15px;background:#4e79a7;border-radius:50%;"></div>
<div style="position:absolute;left:483.0px;top:376.32px;width:15px;height:15px;background:#4e79a7;border-radius:50%;"></div>
<div style="position:absolute;left:483.0px;top:390.25px;width:15px;height:15px;background:#4e79a7;border-radius:50%;"></div>
<div style="position:absolute;left:483.0px;top:404.18px;width:15px;height:15px;background:#4e79a7;border-radius:50%;"></div>
<div style="position:absolute;left:483.0px;top:418.11px;width:15px;height:15px;background:#4e79a7;border-radius:50%;"></div>
<div style="position:absolute;left:483.0px;top:432.04px;width:15px;height:15px;background:#4e79a7;border-radius:50%;"></div>
<div style="position:absolute;left:483.0px;top:445.97px;width:15px;height:15px;background:#4e79a7;border-radius:50%;"></div>
<div style="position:absolute;left:946px;top:104px;width:131px;height:68px;background:#fff;border:1px solid #e6e6e6;"></div>
<div style="position:absolute;left:947px;top:105px;width:129px;height:24.5px;background:#f9f9f9;"></div>
<div style="position:absolute;top:109.00px;line-height:16px;font-size:12px;color:#5e5e5e;white-space:nowrap;left:951.50px;transform-origin:0 50%;transform:scaleX(0.8576);">Measure Names</div>
<div style="position:absolute;left:949.5px;top:131.6px;width:7.8px;height:7.8px;background:#4e79a7;"></div>
<div style="position:absolute;top:127.90px;line-height:16px;font-size:11.5px;color:#666;white-space:nowrap;left:961.50px;transform-origin:0 50%;transform:scaleX(0.9070);">AVG(0)</div>
<div style="position:absolute;left:949.5px;top:145.79999999999998px;width:7.8px;height:7.8px;background:#e15759;"></div>
<div style="position:absolute;top:142.10px;line-height:16px;font-size:11.5px;color:#666;white-space:nowrap;left:961.50px;transform-origin:0 50%;transform:scaleX(1.0246);">Profit</div>
<div style="position:absolute;left:949.5px;top:160.0px;width:7.8px;height:7.8px;background:#b1b5b5;"></div>
<div style="position:absolute;top:156.30px;line-height:16px;font-size:11.5px;color:#666;white-space:nowrap;left:961.50px;transform-origin:0 50%;transform:scaleX(0.9038);">Sales</div>
<div style="position:absolute;left:0px;top:512px;width:1080px;height:25px;background:#e6e6e6;border-top:1px solid #d4d4d4;"></div>
<div style="position:absolute;top:517.30px;line-height:16px;font-size:11.5px;color:#666;white-space:nowrap;left:14.50px;transform-origin:0 50%;transform:scaleX(0.8995);">Data Source</div>
<div style="position:absolute;top:517.30px;line-height:16px;font-size:11.5px;color:#666;white-space:nowrap;left:165.50px;transform-origin:0 50%;transform:scaleX(0.9117);">Create hierarchy</div>
<div style="position:absolute;top:517.30px;line-height:16px;font-size:11.5px;color:#666;white-space:nowrap;left:257.50px;transform-origin:0 50%;transform:scaleX(0.9148);">Create custom groups</div>
<div style="position:absolute;top:517.30px;line-height:16px;font-size:11.5px;color:#666;white-space:nowrap;left:377.00px;transform-origin:0 50%;transform:scaleX(0.8849);">Measure names and measure va...</div>
<div style="position:absolute;top:517.30px;line-height:16px;font-size:11.5px;color:#666;white-space:nowrap;left:545.50px;transform-origin:0 50%;transform:scaleX(0.9038);">Combined axis</div>
<div style="position:absolute;top:517.30px;line-height:16px;font-size:11.5px;color:#666;white-space:nowrap;left:628.00px;transform-origin:0 50%;transform:scaleX(0.9332);">Thermometer chart</div>
<div style="position:absolute;top:517.30px;line-height:16px;font-size:11.5px;color:#666;white-space:nowrap;left:733.75px;transform-origin:0 50%;transform:scaleX(0.8819);">Dual axis sales vs budget</div>
<div style="position:absolute;top:517.30px;line-height:16px;font-size:11.5px;color:#666;white-space:nowrap;left:866.25px;transform-origin:0 50%;transform:scaleX(0.9168);">Real thermometer chart</div>
<div style="position:absolute;left:109px;top:513px;width:52px;height:24px;overflow:hidden">
<div style="position:absolute;top:4.30px;line-height:16px;font-size:11.5px;color:#666;white-space:nowrap;left:1.50px;transform-origin:0 50%;transform:scaleX(0.9160);">grouping</div>
</div>
<div style="position:absolute;left:989px;top:513px;width:37.5px;height:24px;overflow:hidden">
<div style="position:absolute;top:4.30px;line-height:16px;font-size:11.5px;color:#666;white-space:nowrap;left:4.75px;transform-origin:0 50%;transform:scaleX(0.8308);">Sheet 32</div>
</div>
<div style="position:absolute;left:108.25px;top:513px;width:1px;height:24px;background:#d6d6d6;"></div>
<div style="position:absolute;left:160.75px;top:513px;width:1px;height:24px;background:#d6d6d6;"></div>
<div style="position:absolute;left:252.0px;top:513px;width:1px;height:24px;background:#d6d6d6;"></div>
<div style="position:absolute;left:371.25px;top:513px;width:1px;height:24px;background:#d6d6d6;"></div>
<div style="position:absolute;left:540.0px;top:513px;width:1px;height:24px;background:#d6d6d6;"></div>
<div style="position:absolute;left:622.5px;top:513px;width:1px;height:24px;background:#d6d6d6;"></div>
<div style="position:absolute;left:728.25px;top:513px;width:1px;height:24px;background:#d6d6d6;"></div>
<div style="position:absolute;left:860.75px;top:513px;width:1px;height:24px;background:#d6d6d6;"></div>
<div style="position:absolute;left:987.75px;top:513px;width:1px;height:24px;background:#d6d6d6;"></div>
<div style="position:absolute;left:1026.0px;top:513px;width:1px;height:24px;background:#d6d6d6;"></div>
<div style="position:absolute;left:1043.75px;top:513px;width:1px;height:24px;background:#d6d6d6;"></div>
<div style="position:absolute;left:1062.5px;top:513px;width:1px;height:24px;background:#d6d6d6;"></div>
<svg style="left:6px;top:520.5px" width="6" height="8" viewBox="0 0 6 8"><rect x="0.6" y="1" width="4.8" height="6.2" rx="1.2" fill="none" stroke="#666" stroke-width="1"/><path d="M0.6 2.4H5.4" stroke="#666" stroke-width="0.8"/></svg>
<div style="position:absolute;left:199.6px;top:15.6px;width:204.6px;height:362px;background:#f0f0f0;border:1px solid #cfcfcf;box-shadow:1px 1px 1.5px rgba(0,0,0,.55)"></div>
<div style="position:absolute;left:202px;top:35.5px;width:17px;height:17.5px;background:#91c9f7;"></div>
<div style="position:absolute;left:202px;top:52.8px;width:200.5px;height:17.5px;background:#91c9f7;"></div>
<div style="position:absolute;top:19.00px;line-height:16px;font-size:11.5px;color:#1a1a1a;white-space:nowrap;left:225.00px;transform-origin:0 50%;transform:scaleX(0.8510);">Show Mark Labels</div>
<div style="position:absolute;top:36.50px;line-height:16px;font-size:11.5px;color:#1a1a1a;white-space:nowrap;left:225.00px;transform-origin:0 50%;transform:scaleX(0.8665);">Aggregate Measures</div>
<div style="position:absolute;top:54.00px;line-height:16px;font-size:11.5px;color:#1a1a1a;white-space:nowrap;left:225.00px;transform-origin:0 50%;transform:scaleX(0.8378);">Stack Marks</div>
<div style="position:absolute;left:391.3px;top:57.75px;width:0;height:0;border-left:3.6px solid #1a1a1a;border-top:3.5px solid transparent;border-bottom:3.5px solid transparent"></div>
<div style="position:absolute;top:71.50px;line-height:16px;font-size:11.5px;color:#1a1a1a;white-space:nowrap;left:225.00px;transform-origin:0 50%;transform:scaleX(0.8335);">View Data...</div>
<div style="position:absolute;top:89.00px;line-height:16px;font-size:11.5px;color:#8c8c8c;white-space:nowrap;left:225.00px;transform-origin:0 50%;transform:scaleX(0.8502);">Reveal Hidden Data</div>
<div style="position:absolute;top:112.00px;line-height:16px;font-size:11.5px;color:#1a1a1a;white-space:nowrap;left:225.00px;transform-origin:0 50%;transform:scaleX(0.8428);">Percentage Of</div>
<div style="position:absolute;left:391.3px;top:115.75px;width:0;height:0;border-left:3.6px solid #1a1a1a;border-top:3.5px solid transparent;border-bottom:3.5px solid transparent"></div>
<div style="position:absolute;top:134.50px;line-height:16px;font-size:11.5px;color:#1a1a1a;white-space:nowrap;left:225.00px;transform-origin:0 50%;transform:scaleX(0.8488);">Totals</div>
<div style="position:absolute;left:391.3px;top:138.25px;width:0;height:0;border-left:3.6px solid #1a1a1a;border-top:3.5px solid transparent;border-bottom:3.5px solid transparent"></div>
<div style="position:absolute;top:152.00px;line-height:16px;font-size:11.5px;color:#8c8c8c;white-space:nowrap;left:225.00px;transform-origin:0 50%;transform:scaleX(0.8382);">Forecast</div>
<div style="position:absolute;left:391.3px;top:155.75px;width:0;height:0;border-left:3.6px solid #a0a0a0;border-top:3.5px solid transparent;border-bottom:3.5px solid transparent"></div>
<div style="position:absolute;top:169.50px;line-height:16px;font-size:11.5px;color:#1a1a1a;white-space:nowrap;left:225.00px;transform-origin:0 50%;transform:scaleX(0.8126);">Trend Lines</div>
<div style="position:absolute;left:391.3px;top:173.25px;width:0;height:0;border-left:3.6px solid #1a1a1a;border-top:3.5px solid transparent;border-bottom:3.5px solid transparent"></div>
<div style="position:absolute;top:187.00px;line-height:16px;font-size:11.5px;color:#1a1a1a;white-space:nowrap;left:225.00px;transform-origin:0 50%;transform:scaleX(0.8242);">Special Values</div>
<div style="position:absolute;left:391.3px;top:190.75px;width:0;height:0;border-left:3.6px solid #1a1a1a;border-top:3.5px solid transparent;border-bottom:3.5px solid transparent"></div>
<div style="position:absolute;top:204.50px;line-height:16px;font-size:11.5px;color:#1a1a1a;white-space:nowrap;left:225.00px;transform-origin:0 50%;transform:scaleX(0.8510);">Table Layout</div>
<div style="position:absolute;left:391.3px;top:208.25px;width:0;height:0;border-left:3.6px solid #1a1a1a;border-top:3.5px solid transparent;border-bottom:3.5px solid transparent"></div>
<div style="position:absolute;top:227.00px;line-height:16px;font-size:11.5px;color:#1a1a1a;white-space:nowrap;left:225.00px;transform-origin:0 50%;transform:scaleX(0.8499);">Legends</div>
<div style="position:absolute;left:391.3px;top:230.75px;width:0;height:0;border-left:3.6px solid #1a1a1a;border-top:3.5px solid transparent;border-bottom:3.5px solid transparent"></div>
<div style="position:absolute;top:244.50px;line-height:16px;font-size:11.5px;color:#1a1a1a;white-space:nowrap;left:225.00px;transform-origin:0 50%;transform:scaleX(0.8146);">Filters</div>
<div style="position:absolute;left:391.3px;top:248.25px;width:0;height:0;border-left:3.6px solid #1a1a1a;border-top:3.5px solid transparent;border-bottom:3.5px solid transparent"></div>
<div style="position:absolute;top:262.00px;line-height:16px;font-size:11.5px;color:#1a1a1a;white-space:nowrap;left:225.00px;transform-origin:0 50%;transform:scaleX(0.8975);">Highlighters</div>
<div style="position:absolute;left:391.3px;top:265.75px;width:0;height:0;border-left:3.6px solid #1a1a1a;border-top:3.5px solid transparent;border-bottom:3.5px solid transparent"></div>
<div style="position:absolute;top:279.50px;line-height:16px;font-size:11.5px;color:#8c8c8c;white-space:nowrap;left:225.00px;transform-origin:0 50%;transform:scaleX(0.8244);">Parameters</div>
<div style="position:absolute;left:391.3px;top:283.25px;width:0;height:0;border-left:3.6px solid #a0a0a0;border-top:3.5px solid transparent;border-bottom:3.5px solid transparent"></div>
<div style="position:absolute;top:302.00px;line-height:16px;font-size:11.5px;color:#1a1a1a;white-space:nowrap;left:225.00px;transform-origin:0 50%;transform:scaleX(0.8246);">Create Calculated Field...</div>
<div style="position:absolute;top:319.50px;line-height:16px;font-size:11.5px;color:#1a1a1a;white-space:nowrap;left:225.00px;transform-origin:0 50%;transform:scaleX(0.8438);">Edit Calculated Field</div>
<div style="position:absolute;left:391.3px;top:323.25px;width:0;height:0;border-left:3.6px solid #1a1a1a;border-top:3.5px solid transparent;border-bottom:3.5px solid transparent"></div>
<div style="position:absolute;top:342.00px;line-height:16px;font-size:11.5px;color:#1a1a1a;white-space:nowrap;left:225.00px;transform-origin:0 50%;transform:scaleX(0.8223);">Cycle Fields</div>
<div style="position:absolute;top:359.50px;line-height:16px;font-size:11.5px;color:#1a1a1a;white-space:nowrap;left:225.00px;transform-origin:0 50%;transform:scaleX(0.8582);">Swap Rows and Columns</div>
<div style="position:absolute;top:359.50px;line-height:16px;font-size:11.5px;color:#1a1a1a;white-space:nowrap;left:361.50px;transform-origin:0 50%;transform:scaleX(0.8828);">Ctrl+W</div>
<div style="position:absolute;left:223px;top:107.5px;width:179px;height:1px;background:#dadada;"></div>
<div style="position:absolute;left:223px;top:130.0px;width:179px;height:1px;background:#dadada;"></div>
<div style="position:absolute;left:223px;top:223.0px;width:179px;height:1px;background:#dadada;"></div>
<div style="position:absolute;left:223px;top:298.0px;width:179px;height:1px;background:#dadada;"></div>
<div style="position:absolute;left:223px;top:338.0px;width:179px;height:1px;background:#dadada;"></div>
<svg style="left:205.5px;top:40px" width="10" height="8" viewBox="0 0 10 8"><path d="M1 4.2L3.6 6.8L8.8 1.2" stroke="#2b2b2b" stroke-width="1.1" fill="none"/></svg>
<div style="position:absolute;left:205.5px;top:75.5px;width:2.6px;height:1.7px;background:#8a8a8a;"></div>
<div style="position:absolute;left:208.9px;top:75.5px;width:2.6px;height:1.7px;background:#8a8a8a;"></div>
<div style="position:absolute;left:212.3px;top:75.5px;width:2.6px;height:1.7px;background:#8a8a8a;"></div>
<div style="position:absolute;left:205.5px;top:78.2px;width:2.6px;height:1.7px;background:#8a8a8a;"></div>
<div style="position:absolute;left:208.9px;top:78.2px;width:2.6px;height:1.7px;background:#8a8a8a;"></div>
<div style="position:absolute;left:212.3px;top:78.2px;width:2.6px;height:1.7px;background:#8a8a8a;"></div>
<div style="position:absolute;left:205.5px;top:80.9px;width:2.6px;height:1.7px;background:#8a8a8a;"></div>
<div style="position:absolute;left:208.9px;top:80.9px;width:2.6px;height:1.7px;background:#8a8a8a;"></div>
<div style="position:absolute;left:212.3px;top:80.9px;width:2.6px;height:1.7px;background:#8a8a8a;"></div>
<div style="position:absolute;left:399.4px;top:53.1px;width:86px;height:60.8px;background:#f0f0f0;border:1px solid #cfcfcf;box-shadow:1px 1px 1.5px rgba(0,0,0,.55)"></div>
<div style="position:absolute;left:401.3px;top:55.2px;width:17.6px;height:17.5px;background:#91c9f7;"></div>
<div style="position:absolute;left:401.3px;top:95.1px;width:81.2px;height:17.7px;background:#91c9f7;"></div>
<div style="position:absolute;top:56.50px;line-height:16px;font-size:11.5px;color:#1a1a1a;white-space:nowrap;left:424.50px;transform-origin:0 50%;transform:scaleX(0.9094);">Automatic</div>
<div style="position:absolute;top:79.50px;line-height:16px;font-size:11.5px;color:#1a1a1a;white-space:nowrap;left:424.50px;transform-origin:0 50%;transform:scaleX(0.8800);">On</div>
<div style="position:absolute;top:96.50px;line-height:16px;font-size:11.5px;color:#1a1a1a;white-space:nowrap;left:424.50px;transform-origin:0 50%;transform:scaleX(0.9255);">Off</div>
<div style="position:absolute;left:422px;top:75.2px;width:60px;height:1px;background:#dadada;"></div>
<svg style="left:405.3px;top:59.8px" width="10" height="8" viewBox="0 0 10 8"><path d="M1 4.2L3.6 6.8L8.8 1.2" stroke="#2b2b2b" stroke-width="1.1" fill="none"/></svg>
<svg style="left:13.7px;top:27.7px" width="10" height="10" viewBox="0 0 10 10"><path d="M2.9 5H7.1M5 2.9V7.1" stroke="#ef8a3c" stroke-width="0.9" fill="none"/><path d="M4.0 1.3H6.0M5 0.30000000000000004V2.3" stroke="#5b9aa8" stroke-width="0.6" fill="none"/><path d="M4.0 8.7H6.0M5 7.699999999999999V9.7" stroke="#7b7fbf" stroke-width="0.6" fill="none"/><path d="M0.30000000000000004 5H2.3M1.3 4.0V6.0" stroke="#5b9aa8" stroke-width="0.6" fill="none"/><path d="M7.699999999999999 5H9.7M8.7 4.0V6.0" stroke="#6a6fb0" stroke-width="0.6" fill="none"/><path d="M1.3 2.7H3.9000000000000004M2.6 1.4000000000000001V4.0" stroke="#f0ac62" stroke-width="0.7" fill="none"/><path d="M6.1000000000000005 2.7H8.700000000000001M7.4 1.4000000000000001V4.0" stroke="#5b9aa8" stroke-width="0.7" fill="none"/><path d="M1.3 7.3H3.9000000000000004M2.6 6.0V8.6" stroke="#d9486a" stroke-width="0.7" fill="none"/><path d="M6.1000000000000005 7.3H8.700000000000001M7.4 6.0V8.6" stroke="#2f5aa0" stroke-width="0.7" fill="none"/></svg>
<svg style="left:51.4px;top:28.1px" width="10" height="9" viewBox="0 0 10 9"><path d="M9.5 4.3H1.2M4.8 0.6L1 4.3L4.8 8" stroke="#555" stroke-width="1.2" fill="none"/></svg>
<svg style="left:78.6px;top:28.1px" width="10" height="9" viewBox="0 0 10 9"><path d="M0.5 4.3H8.8M5.2 0.6L9 4.3L5.2 8" stroke="#b4b4b4" stroke-width="1.3" fill="none"/></svg>
<svg style="left:106px;top:28px" width="10" height="10" viewBox="0 0 10 10"><rect x="0.6" y="0.6" width="8.2" height="8.2" fill="none" stroke="#777" stroke-width="0.9"/><rect x="1.8" y="5.8" width="3.6" height="2.2" fill="#777"/></svg>
<svg style="left:133.3px;top:27.6px" width="9" height="11" viewBox="0 0 9 11"><path d="M0.6 2V7.6C0.6 8.6 3.2 8.7 4 8.5M6 2V5" fill="none" stroke="#666" stroke-width="1"/><ellipse cx="3.3" cy="2" rx="2.7" ry="1.3" fill="none" stroke="#666" stroke-width="1"/><path d="M4 8.2H8.6M6.3 5.9V10.5" stroke="#222" stroke-width="1.3"/></svg>
<svg style="left:160px;top:27.6px" width="9" height="11" viewBox="0 0 9 11"><path d="M0.6 2V7.6C0.6 8.6 3.2 8.7 3.6 8.5M6 2V5.4" fill="none" stroke="#666" stroke-width="1"/><ellipse cx="3.3" cy="2" rx="2.7" ry="1.3" fill="none" stroke="#666" stroke-width="1"/><path d="M4.9 6.4V10.4M7.1 6.4V10.4" stroke="#222" stroke-width="1.2"/></svg>
<div style="position:absolute;left:179.0px;top:32.0px;width:0;height:0;border-top:2.3px solid #555;border-left:2px solid transparent;border-right:2px solid transparent"></div>
<svg style="left:191.5px;top:28px" width="10" height="10" viewBox="0 0 10 10"><path d="M8.6 3.2A4 4 0 1 0 9 5.6" fill="none" stroke="#c8c8c8" stroke-width="1.1"/><path d="M9.2 0.8V3.6H6.4" fill="none" stroke="#c8c8c8" stroke-width="1.1"/></svg>
<svg style="left:434px;top:27px" width="9" height="12" viewBox="0 0 9 12"><path d="M2 8.2L5.4 1.2L7.4 2.2L4 9.2L1.6 9.8Z" fill="none" stroke="#555" stroke-width="0.9"/><path d="M0.3 11.2H8" stroke="#444" stroke-width="1.1"/></svg>
<div style="position:absolute;left:451.0px;top:32.0px;width:0;height:0;border-top:2.3px solid #555;border-left:2px solid transparent;border-right:2px solid transparent"></div>
<svg style="left:466.3px;top:27.6px" width="9" height="10" viewBox="0 0 9 10"><g transform="rotate(32 4.5 5)"><rect x="2.6" y="0.6" width="3.8" height="8.8" rx="1.9" fill="none" stroke="#c6c6c6" stroke-width="0.8"/><path d="M3.8 7.4V3.4C3.8 2.3 5.2 2.3 5.2 3.4V6.6" fill="none" stroke="#c6c6c6" stroke-width="0.8"/></g></svg>
<div style="position:absolute;left:485.0px;top:32.0px;width:0;height:0;border-top:2.3px solid #bdbdbd;border-left:2px solid transparent;border-right:2px solid transparent"></div>
<svg style="left:500.3px;top:28.1px" width="10.2" height="8.8" viewBox="0 0 10.2 8.8"><rect x="0.5" y="0.5" width="9.2" height="7.8" fill="#f8f8f8" stroke="#c8c8c8" stroke-width="0.9"/><path d="M2.9 2.5H7.3M5.1 2.5V6.6M4.2 6.6H6" stroke="#4a4a4a" stroke-width="0.85" fill="none"/></svg>
<svg style="left:527px;top:27.5px" width="9" height="11" viewBox="0 0 9 11"><path d="M3.4 0.8L7.6 3.2L6.6 4L6 6.6L4.4 7.4L1.6 4.6L2.6 3.2L3.2 2.6Z" fill="none" stroke="#555" stroke-width="0.9"/><path d="M3 6.2L0.8 9.6" stroke="#555" stroke-width="0.9"/></svg>
<svg style="left:663.8px;top:28.3px" width="12" height="8.6" viewBox="0 0 12 8.6"><rect x="0.4" y="0.4" width="11" height="7.7" fill="none" stroke="#8a8a8a" stroke-width="0.8"/><path d="M3.2 0.4V8.1M0.4 3H3.2M0.4 5.6H3.2" stroke="#8a8a8a" stroke-width="0.8" fill="none"/><path d="M5.5 7.4V5.4M7.3 7.4V3.2M9.1 7.4V4.4" stroke="#555" stroke-width="1.2"/></svg>
<div style="position:absolute;left:683.0px;top:32.0px;width:0;height:0;border-top:2.3px solid #555;border-left:2px solid transparent;border-right:2px solid transparent"></div>
<svg style="left:698.4px;top:28.3px" width="10" height="9.5" viewBox="0 0 10 9.5"><rect x="1" y="1" width="7.8" height="5" fill="none" stroke="#6a6a6a" stroke-width="0.85"/><path d="M0.1 0.7H9.7" stroke="#555" stroke-width="1.1"/><path d="M4.9 6V8M3 8.5H6.8" stroke="#6a6a6a" stroke-width="0.85" fill="none"/></svg>
<svg style="left:737px;top:27.9px" width="9" height="10" viewBox="0 0 9 10"><circle cx="1.9" cy="4.7" r="1.35" fill="none" stroke="#555" stroke-width="0.85"/><circle cx="6.8" cy="1.9" r="1.35" fill="none" stroke="#555" stroke-width="0.85"/><circle cx="6.8" cy="7.5" r="1.35" fill="none" stroke="#555" stroke-width="0.85"/><path d="M3.1 4L5.6 2.6M3.1 5.4L5.6 6.8" stroke="#555" stroke-width="0.85"/></svg>
<svg style="left:16.2px;top:80.6px" width="7" height="9" viewBox="0 0 7 9"><path d="M0.6 2V6.8C0.6 8.1 6.2 8.1 6.2 6.8V2" fill="none" stroke="#9a9a9a" stroke-width="0.9"/><ellipse cx="3.4" cy="2" rx="2.8" ry="1.3" fill="none" stroke="#9a9a9a" stroke-width="0.9"/></svg>
<svg style="left:16.2px;top:97.6px" width="9" height="10" viewBox="0 0 9 10"><path d="M0.6 2V6.8C0.6 8 3 8.1 3.8 7.9M6.2 2V4.4" fill="none" stroke="#9a9a9a" stroke-width="0.9"/><ellipse cx="3.4" cy="2" rx="2.8" ry="1.3" fill="none" stroke="#9a9a9a" stroke-width="0.9"/><circle cx="6.2" cy="7.2" r="1.9" fill="#3a8fc0"/></svg>
<svg style="left:1032.4px;top:520.9px" width="9.2" height="9.2" viewBox="0 0 10 10"><rect x="0.5" y="0.5" width="6.4" height="5.8" fill="none" stroke="#777" stroke-width="0.8"/><path d="M2 4.6V3.4M3.6 4.6V2.2M5.2 4.6V3" stroke="#888" stroke-width="0.7"/><path d="M5 7.4H9.4M7.2 5.2V9.6" stroke="#444" stroke-width="1.0"/></svg>
<svg style="left:1050.4px;top:520.9px" width="9.2" height="9.2" viewBox="0 0 10 10"><rect x="0.5" y="0.5" width="6.4" height="5.8" fill="none" stroke="#777" stroke-width="0.8"/><path d="M0.5 3.3H6.9M3.7 0.5V6.1" stroke="#888" stroke-width="0.7"/><path d="M5 7.4H9.4M7.2 5.2V9.6" stroke="#444" stroke-width="1.0"/></svg>
<svg style="left:1068.4px;top:520.9px" width="9.2" height="9.2" viewBox="0 0 10 10"><path d="M0.5 0.8L3.4 0.3V6L0.5 6.4ZM3.4 0.3H6.6V6H3.4" fill="none" stroke="#777" stroke-width="0.8"/><path d="M5 7.4H9.4M7.2 5.2V9.6" stroke="#444" stroke-width="1.0"/></svg>
</body></html>
